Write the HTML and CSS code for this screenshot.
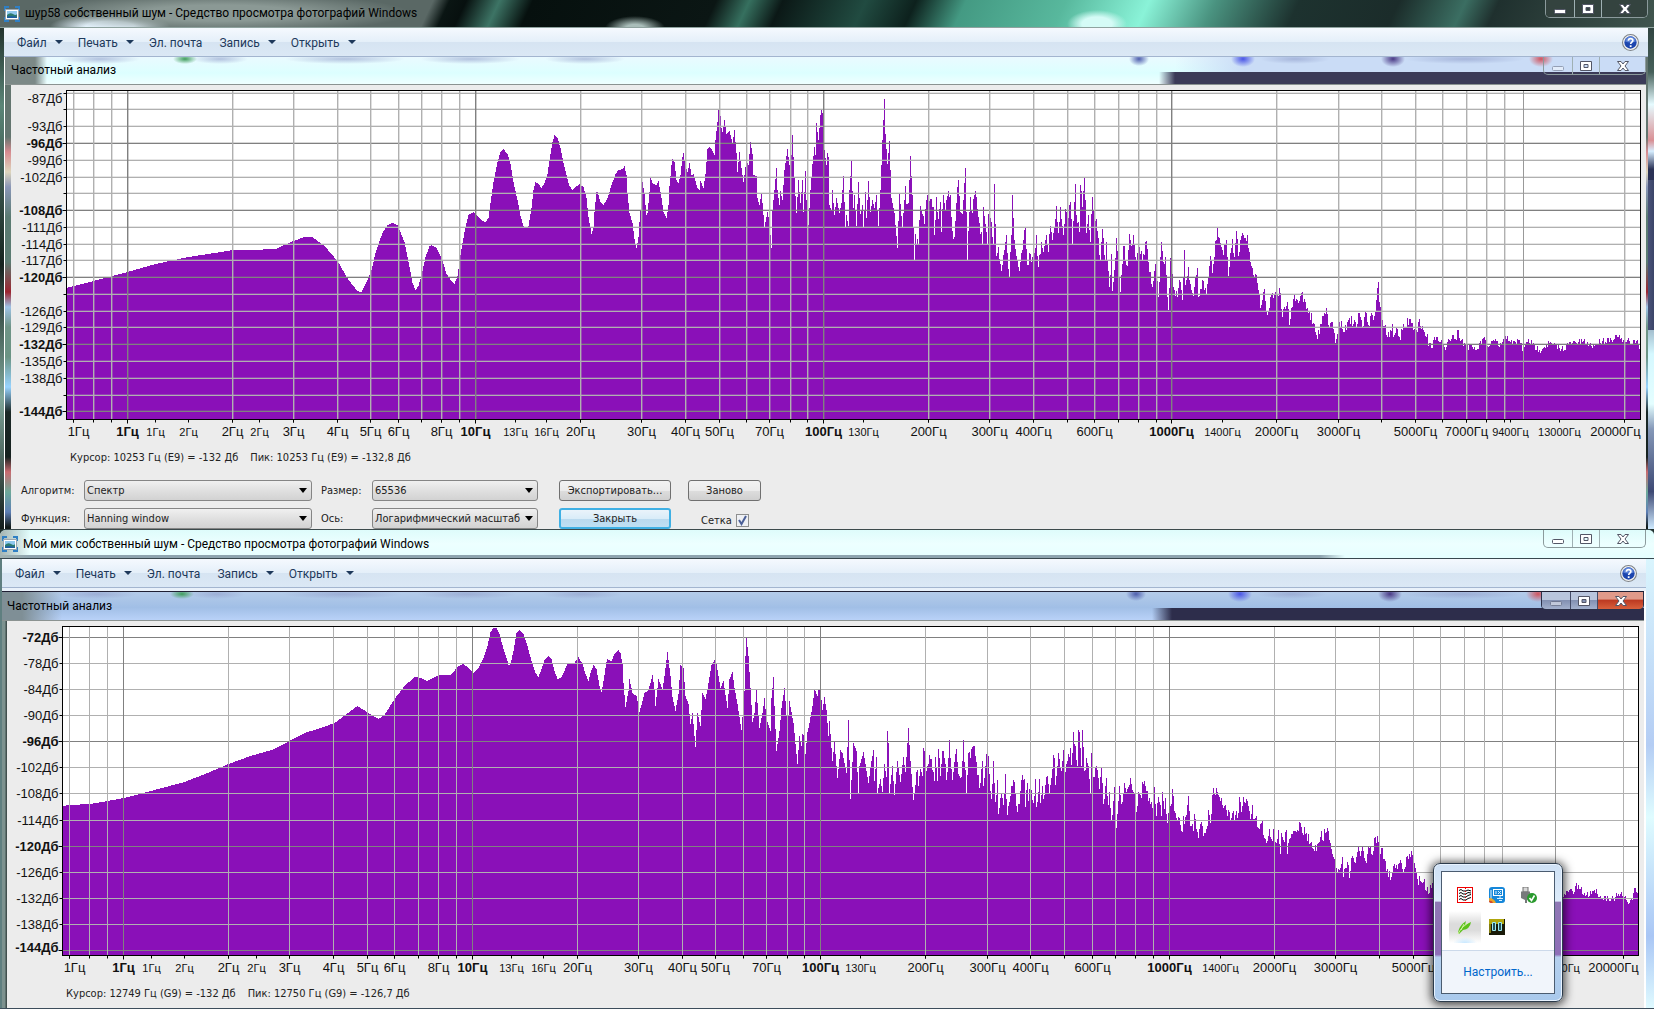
FILE: index.html
```
<!DOCTYPE html>
<html lang="ru">
<head>
  <meta charset="UTF-8">
  <meta name="viewport" content="width=device-width, initial-scale=1.0">
  <title>Средство просмотра фотографий Windows</title>
  <link rel="stylesheet" href="styles.css">
</head>
<body>

  <!-- Shared icons -->
  <svg class="defs" aria-hidden="true">
    <symbol id="photo" viewBox="0 0 16 16">
      <path d="M1 5V1h4M11 1h4v4M15 11v4h-4M5 15H1v-4" fill="none" stroke="#2f7fc4" stroke-width="2"/>
      <rect x="1.5" y="3.5" width="13" height="10" fill="#fff" stroke="#9aa5ae"/>
      <rect x="3" y="5" width="10" height="7" fill="#8fc8ee"/>
      <path d="M3 9q3-3 6-1t4 0v4H3z" fill="#2c7a6e"/>
      <path d="M3 10.500q5-1 10 .5v1H3z" fill="#1e5fa0"/>
    </symbol>
    <symbol id="help" viewBox="0 0 16 16">
      <circle cx="8" cy="8" r="7.500" fill="#f2f2f2" stroke="#7d8287"/>
      <circle cx="8" cy="8" r="5.800" fill="#1d46ae"/>
      <path d="M3 7a5 5 0 0 1 10 0q-5 2-10 0z" fill="#5b83d8"/>
      <path d="M6 6.300c0-2.600 4.200-2.500 4.200-.1 0 1.500-2 1.500-2 3.100" fill="none" stroke="#fff" stroke-width="1.600"/>
      <rect x="7.300" y="10.600" width="1.700" height="1.700" fill="#fff"/>
    </symbol>
    <symbol id="min" viewBox="0 0 14 12">
      <rect x="1.500" y="6.500" width="11" height="4" rx="1" fill="#fff" stroke="#535666"/>
    </symbol>
    <symbol id="max" viewBox="0 0 14 12">
      <path d="M1.500 1.500h11v9h-11zM5 4.500h4v3H5z" fill="#fff" fill-rule="evenodd" stroke="#535666"/>
    </symbol>
    <symbol id="close" viewBox="0 0 14 12">
      <path d="M1.500 1.500h3.500L7 4l2-2.500h3.500L9 6l3.500 4.500H9L7 8l-2 2.500H1.500L5 6z" fill="#fff" stroke="#535666"/>
    </symbol>
  </svg>

  <!-- First viewer window -->
  <section class="window window-back">
    <header class="titlebar">
      <svg class="app-icon"><use href="#photo"/></svg>
      <h1 class="title">шур58 собственный шум - Средство просмотра фотографий Windows</h1>
      <div class="win-buttons dark">
        <button aria-label="Свернуть" class="first"><svg><use href="#min"/></svg></button>
        <button aria-label="Развернуть"><svg><use href="#max"/></svg></button>
        <button aria-label="Закрыть окно" class="wide"><svg><use href="#close"/></svg></button>
      </div>
    </header>
    <nav class="toolbar">
      <button class="drop">Файл</button>
      <button class="drop">Печать</button>
      <button>Эл. почта</button>
      <button class="drop">Запись</button>
      <button class="drop">Открыть</button>
      <button class="help" aria-label="Справка"><svg><use href="#help"/></svg></button>
    </nav>
    <div class="dialog">
      <div class="caption">
        <h2>Частотный анализ</h2>
        <div class="win-buttons">
          <button aria-label="Свернуть" class="first off"><svg><use href="#min"/></svg></button>
          <button aria-label="Развернуть"><svg><use href="#max"/></svg></button>
          <button aria-label="Закрыть анализ" class="wide"><svg><use href="#close"/></svg></button>
        </div>
      </div>
      <div class="panel">
        <svg class="chart" id="chart1" role="img" aria-label="Спектр шур58"></svg>
        <p class="status"><span>Курсор: 10253 Гц (E9) = -132 Дб</span><span>Пик: 10253 Гц (E9) = -132,8 Дб</span></p>
        <form class="controls">
          <label for="algo">Алгоритм:</label>
          <select id="algo"><option>Спектр</option></select>
          <label for="size">Размер:</label>
          <select id="size"><option>65536</option></select>
          <button type="button">Экспортировать...</button>
          <button type="button" class="redo">Заново</button>
          <label for="func">Функция:</label>
          <select id="func"><option>Hanning window</option></select>
          <label for="axis">Ось:</label>
          <select id="axis"><option>Логарифмический масштаб</option></select>
          <button type="button" class="default">Закрыть</button>
          <div class="check">
            <label for="grid">Сетка</label>
            <input type="checkbox" id="grid" checked>
          </div>
        </form>
      </div>
    </div>
  </section>

  <!-- Second viewer window -->
  <section class="window window-front">
    <header class="titlebar">
      <svg class="app-icon"><use href="#photo"/></svg>
      <h1 class="title">Мой мик собственный шум - Средство просмотра фотографий Windows</h1>
      <div class="win-buttons">
        <button aria-label="Свернуть" class="first"><svg><use href="#min"/></svg></button>
        <button aria-label="Развернуть"><svg><use href="#max"/></svg></button>
        <button aria-label="Закрыть окно" class="wide"><svg><use href="#close"/></svg></button>
      </div>
    </header>
    <nav class="toolbar">
      <button class="drop">Файл</button>
      <button class="drop">Печать</button>
      <button>Эл. почта</button>
      <button class="drop">Запись</button>
      <button class="drop">Открыть</button>
      <button class="help" aria-label="Справка"><svg><use href="#help"/></svg></button>
    </nav>
    <div class="dialog">
      <div class="caption">
        <h2>Частотный анализ</h2>
        <div class="win-buttons active">
          <button aria-label="Свернуть" class="first off"><svg><use href="#min"/></svg></button>
          <button aria-label="Развернуть"><svg><use href="#max"/></svg></button>
          <button aria-label="Закрыть анализ" class="wide red"><svg><use href="#close"/></svg></button>
        </div>
      </div>
      <div class="panel">
        <svg class="chart" id="chart2" role="img" aria-label="Спектр мой мик"></svg>
        <p class="status"><span>Курсор: 12749 Гц (G9) = -132 Дб</span><span>Пик: 12750 Гц (G9) = -126,7 Дб</span></p>
      </div>
    </div>
  </section>

  <!-- Notification area flyout -->
  <aside class="tray">
    <div class="tray-inner">
      <div class="tray-icons">
        <button aria-label="Аудио">
          <svg viewBox="0 0 16 16">
            <rect x=".5" y=".5" width="15" height="15" fill="#fff" stroke="#f00000"/>
            <path d="M2 3.500l2-1 2 1.500h3l2-1 3 1M2 6.500l2-1 2 1.500h3l2-1.500 3 .5M2 9.500l2-1 2 1.500h3l2-1.500 3-1M2 12.500l2-1 2 1.500h3l2-1.500 3-1" fill="none" stroke="#000"/>
            <path d="M8.500 1v14" stroke="#f00000" stroke-dasharray="1 2"/>
          </svg>
        </button>
        <button aria-label="Графика">
          <svg viewBox="0 0 16 16">
            <rect width="16" height="16" rx="3" fill="#1687d9"/>
            <rect x="4.500" y="2.500" width="9" height="6" fill="none" stroke="#fff"/>
            <path d="M7 4v3M9 4l3 3M12 4L9 7M2 3v9M8 11.500h6M10 13.500h3M11 9v2" fill="none" stroke="#d9f1ff"/>
            <path d="M0 11q5 0 7 5H3q-3 0-3-3z" fill="#e8a52b"/>
            <path d="M0 14q3-1 4 2H3q-3 0-3-2z" fill="#d8442b"/>
          </svg>
        </button>
        <button aria-label="Извлечение устройства">
          <svg viewBox="0 0 16 16">
            <rect x="2" y="0" width="5" height="5" fill="#d8d8d8" stroke="#707070"/>
            <path d="M0 4.500h9V11l-3 2v3H4v-3l-4-2z" fill="#77797b"/>
            <circle cx="11" cy="11" r="5" fill="#2a9a2e"/>
            <path d="M8.500 11l2 2.500 3-5" fill="none" stroke="#fff" stroke-width="1.600"/>
          </svg>
        </button>
        <button aria-label="Перо" class="hover">
          <svg viewBox="0 0 16 16">
            <path d="M1 14C2 8 5 5 9 2l-1 4 6-3q-1 7-8 8l-4 4z" fill="#5cc11a"/>
            <path d="M1 15C4 9 7 7 11 4M4 11l3-6" fill="none" stroke="#d4f6a4"/>
          </svg>
        </button>
        <button aria-label="Монитор">
          <svg viewBox="0 0 16 16">
            <rect width="16" height="16" fill="#191a08"/>
            <path d="M0 0h15v5H0z" fill="#b0a60d"/>
            <path d="M0 5h2v9H0z" fill="#857e10"/>
            <path d="M3.500 3.500h3v8h-3zM9.500 3.500h3v8h-3z" fill="#24515a" stroke="#9beaf3"/>
          </svg>
        </button>
      </div>
      <div class="tray-footer"><a href="#">Настроить...</a></div>
    </div>
  </aside>

  <script src="charts.js"></script>
</body>
</html>
```
FILE: styles.css
```
* {
  box-sizing: border-box;
}

body {
  margin: 0;
  min-height: 100vh;
  display: flex;
  flex-direction: column;
  position: relative;
  font-family: Roboto, "Open Sans", sans-serif;
  font-size: 12px;
  color: #000;
  background: #20302e;
}

button, select, input {
  font: inherit;
  color: inherit;
  margin: 0;
}

h1, h2, p {
  margin: 0;
  font-weight: normal;
}

.defs {
  display: none;
}

/* Window frames */
.window {
  display: flex;
  flex-direction: column;
}

.window-back {
  padding: 0 6px 0 4px;
  background:
    linear-gradient(#0d1614, #5b8577 20%, #16231f 50%, #7fa69a 75%, #141d1b) left / 4px 100% no-repeat,
    linear-gradient(#2c3f3b 10%, #46605a 40%, #e6fbff 58%, #d98f94 78%, #d7eeff 84%, #2b3256 94%) right top / 6px 180px no-repeat,
    linear-gradient(90deg, #4a5379, #3b4468) right 180px / 6px 150px no-repeat,
    linear-gradient(#3b4468, #d5f8ff 30%, #e4feff 50%, #8598b8 60%, #3d4974 85%, #cfeaff) right bottom / 6px 250px no-repeat,
    #24322f;
}

.window-front {
  flex: 1;
  padding: 0 8px 0 2px;
  border-top: 1px solid #3c4a4c;
  border-bottom: 2px solid #3c4d5b;
  border-radius: 6px 6px 0 0;
  background:
    linear-gradient(#dffbff, #b4cdf4 45%, #dffcff 60%, #a9c6f5 85%, #dffaff) right / 8px 100% no-repeat,
    #5f7f80;
}

.titlebar {
  display: flex;
  align-items: flex-start;
  height: 28px;
  border-bottom: 1px solid #8fa39f;
}

.window-back .titlebar {
  margin: 0 -6px 0 -4px;
  padding: 0 6px 0 4px;
  background:
    radial-gradient(ellipse 190px 20px at 220px 13px, #8b9995 40%, transparent),
    radial-gradient(ellipse 60px 12px at 110px 26px, #e6f4ff 40%, transparent),
    radial-gradient(ellipse 30px 12px at 635px 28px, #a9bdb9 30%, transparent),
    radial-gradient(ellipse 30px 14px at 1097px 24px, #d5fbf6 50%, transparent),
    linear-gradient(115deg, transparent 26%, #0a1513 27%, #07100f 28%, #3d7465 30%, #06100e 32%, #0b1614 43%, #36705f 45%, #0b1816 47%, #214b41 52%, #0d211d 55%, #449a83 58%, #58b89d 64%, #8af3d8 69%, #4a9380 73%, #1d322f 78%, #1b2c2a 84%, #3b6e62 88%, #1f302e 90%, #41564f),
    #5a6865;
}

.window-front .titlebar {
  height: 29px;
  margin: 0 -8px 0 -2px;
  padding: 0 8px 0 2px;
  border-bottom-color: #39484f;
  border-radius: 6px 6px 0 0;
  background:
    linear-gradient(90deg, #a4b4b2, transparent 30px),
    linear-gradient(90deg, #8ea4af 1320px, transparent 1345px) 0 bottom / 100% 3px no-repeat,
    linear-gradient(#defcfb, #edffff 50%, #e5ffff);
}

.app-icon {
  width: 16px;
  height: 16px;
  margin: 6px 5px 0 0;
}

.title {
  flex: 1;
  font-size: 12px;
  line-height: 26px;
}

.window-front .title {
  line-height: 28px;
}

/* Minimize, maximize, close */
.win-buttons {
  display: flex;
  height: 18px;
  border: 1px solid #8b9a9c;
  border-top: 0;
  border-radius: 0 0 5px 5px;
  overflow: hidden;
}

.win-buttons button {
  width: 27px;
  padding: 0;
  border: 0;
  border-right: 1px solid #9fb0b3;
  background: transparent;
  display: flex;
  align-items: center;
  justify-content: center;
}

.win-buttons .first {
  width: 29px;
}

.win-buttons .wide {
  width: 45px;
  border-right: 0;
}

.win-buttons svg {
  width: 14px;
  height: 12px;
}

.win-buttons .off svg {
  opacity: .45;
}

.win-buttons.dark button {
  background: #34433f;
}

.win-buttons.active {
  border-color: #2b3048;
}

.win-buttons.active button {
  background: linear-gradient(#b9c5dc 45%, #8391b2 50%, #a3b1cd);
  border-right-color: #444c68;
}

.win-buttons.active .red {
  background: linear-gradient(#e09a8a 40%, #bd3b22 50%, #d8603c);
}

/* Toolbar */
.toolbar {
  display: flex;
  align-items: center;
  height: 29px;
  padding: 1px 9px 0 13px;
  color: #1e395b;
  background: linear-gradient(#f5f9fe, #e4eff9 50%, #d6e4f2 51%, #dbe8f5);
  border-bottom: 1px solid #a3b5cf;
}

.toolbar button {
  padding: 0;
  border: 0;
  margin-right: 17px;
  background: none;
  line-height: 18px;
}

.toolbar .drop {
  margin-right: 15px;
}

.toolbar .drop::after {
  content: "";
  display: inline-block;
  margin: 0 0 3px 8px;
  border: 4px solid transparent;
  border-top-color: #1e395b;
  border-bottom: 0;
}

.toolbar .help {
  margin: 0 0 0 auto;
  width: 17px;
  height: 17px;
}

.help svg {
  width: 17px;
  height: 17px;
  display: block;
}

/* Frequency analysis dialog */
.dialog {
  display: flex;
  flex-direction: column;
  flex: 1;
}

.window-back .dialog {
  padding: 0 2px 0 6px;
  border-left: 1px solid #fff;
  background: linear-gradient(#63756f 80px, #d78b90 95px, #ded6bd 115px, #8a97b8 130px, #5b7b72 160px, #5b7b72 205px, #9c2530 235px, #9fc3e6 250px, #6f9487 270px, #6b9484 300px, #98d4ff 330px, #1a2826 355px, #16211f 400px, #c96b70 415px, #6da99a 435px, #5e7fb5 455px, #131b19 470px);
}

.window-front .dialog {
  padding: 0 2px 0 5px;
  border-top: 3px solid #e9f1fa;
  background: linear-gradient(90deg, #7d928f 3px, #41504e 4px, #cdd7e8 50%, #fff);
}

.caption {
  display: flex;
  justify-content: space-between;
  height: 28px;
  border-bottom: 1px solid #8b9391;
  /* what shows through the glass */
  --ghosts:
    radial-gradient(ellipse 12px 5px at 180px 2px, #3f9d5c, transparent),
    radial-gradient(ellipse 40px 5px at 95px 2px, #8f9dc999, transparent),
    radial-gradient(ellipse 28px 5px at 215px 2px, #8f9dc999, transparent),
    radial-gradient(ellipse 60px 5px at 340px 2px, #8f9dc999, transparent),
    radial-gradient(ellipse 50px 5px at 465px 2px, #8f9dc999, transparent),
    radial-gradient(ellipse 40px 5px at 580px 2px, #8f9dc999, transparent),
    radial-gradient(ellipse 10px 7px at 1134px 2px, #4f5fae, transparent),
    radial-gradient(ellipse 12px 8px at 1238px 2px, #4a55e6, transparent),
    radial-gradient(ellipse 35px 5px at 1290px 2px, #8f9dc999, transparent),
    radial-gradient(ellipse 12px 8px at 1388px 2px, #4a3a86, transparent),
    radial-gradient(ellipse 60px 5px at 1460px 2px, #8f9dc999, transparent),
    radial-gradient(ellipse 12px 8px at 1536px 2px, #d05560, transparent);
}

.window-back .caption {
  margin: 0 0 0 -6px;
  background:
    var(--ghosts),
    linear-gradient(90deg, #7c8987 30px, transparent 42px),
    linear-gradient(90deg, transparent 1154px, #3b3a57 1170px) 0 bottom / 100% 12px no-repeat,
    linear-gradient(90deg, transparent 1170px, #cadcf6 1240px) 0 0 / 100% 15px no-repeat,
    linear-gradient(#eafaff, #dcffff 60%, #efffff);
}

.window-front .caption {
  height: 30px;
  margin: 0 0 0 -5px;
  border-top: 1px solid #1f1f33;
  background:
    var(--ghosts),
    linear-gradient(90deg, #7f8f96 20px, transparent 60px),
    linear-gradient(90deg, transparent 1150px, #2d2d4b 1170px) 0 bottom / 100% 12px no-repeat,
    linear-gradient(#b4cbe9, #a1bfe6 55%, #b9d2f8);
}

.caption h2 {
  padding-left: 6px;
  font-size: 12px;
  line-height: 26px;
}

.window-front .caption h2 {
  padding-left: 5px;
  line-height: 28px;
}

.panel {
  flex: 1;
  background: #ececec;
  font-family: "DejaVu Sans Condensed", "DejaVu Sans", sans-serif;
  font-size: 11px;
}

.chart {
  display: block;
  width: 100%;
  height: 359px;
}

.chart text {
  font-family: "Liberation Sans", sans-serif;
  font-size: 13px;
  fill: #111;
}

.chart .small {
  font-size: 11px;
}

.chart .bold {
  font-weight: bold;
}

.status {
  display: flex;
  gap: 12px;
  padding-left: 59px;
  line-height: 28px;
  color: #222;
}

.controls {
  display: grid;
  grid-template-columns: 63px 228px 60px 166px 112px 73px;
  grid-auto-rows: 21px;
  align-items: center;
  row-gap: 7px;
  padding: 8px 0 0 10px;
  color: #222;
}

.controls label[for="size"], .controls label[for="axis"] {
  padding-left: 9px;
}

.controls select {
  appearance: none;
  width: 100%;
  height: 21px;
  padding: 0 16px 0 2px;
  border: 1px solid #858585;
  border-radius: 3px;
  background:
    url("data:image/svg+xml,%3Csvg xmlns='http://www.w3.org/2000/svg' width='8' height='5'%3E%3Cpath d='M0 0h8L4 5z'/%3E%3C/svg%3E") right 4px center no-repeat,
    linear-gradient(#f0f0f0, #e0e0e0 50%, #d2d2d2);
}

.controls button {
  height: 21px;
  margin-left: 21px;
  margin-right: -21px;
  padding: 0;
  border: 1px solid #707070;
  border-radius: 3px;
  background: linear-gradient(#f2f2f2, #ebebeb 50%, #dddddd 51%, #cfcfcf);
}

.controls .redo, .check {
  margin-left: 38px;
  margin-right: -38px;
}

.controls .default {
  border: 2px solid #3fb0e4;
  background: linear-gradient(#eaf3fa, #d9ecf8 50%, #b9d9ee 51%, #bfdff3);
}

.check {
  display: flex;
  align-items: center;
  gap: 4px;
  padding: 3px 0 0 13px;
}

.check input {
  appearance: none;
  width: 13px;
  height: 13px;
  border: 1px solid #8e8f8f;
  background: url("data:image/svg+xml,%3Csvg xmlns='http://www.w3.org/2000/svg' width='11' height='11'%3E%3Cpath d='M2 5l2.500 4L9 1' fill='none' stroke='%234b5f97' stroke-width='2'/%3E%3C/svg%3E") center no-repeat, #eef0f4;
}

/* Tray flyout */
.tray {
  position: absolute;
  right: 91px;
  bottom: 8px;
  width: 130px;
  padding: 7px;
  border: 1px solid #2c3b4b;
  border-radius: 7px;
  background: linear-gradient(#cfe1f5, #dcebfa 27%, #8f78b5 28%, #8f6fb8 66%, #b5d0ee 68%, #a9c9ec);
  box-shadow: inset 0 0 0 1px #e8f3ff, 0 1px 10px 2px rgba(0, 0, 0, .7);
}

.tray-inner {
  border: 1px solid #4b5c70;
  background: #fff;
}

.tray-icons {
  display: grid;
  grid-template-columns: repeat(3, 32px);
  grid-auto-rows: 32px;
  justify-content: center;
  padding: 7px 2px 7px 0;
}

.tray-icons button {
  padding: 8px;
  border: 0;
  background: none;
}

.tray-icons svg {
  display: block;
  width: 16px;
  height: 16px;
}

.tray-icons .hover {
  background:
    radial-gradient(ellipse 12px 6px at 50% 100%, #c9e8ff, transparent),
    linear-gradient(#fff, #dcdcdc 40%, #dcdcdc 60%, #fff);
}

.tray-footer {
  border-top: 1px solid #ccd9ea;
  background: #f1f5fb;
  text-align: center;
  line-height: 42px;
}

.tray-footer a {
  color: #0066cc;
  text-decoration: none;
}
```
FILE: charts.js
```
// Plot area inside the svg
const LEFT = 55.5, TOP = 5.5, RIGHT = 5.5, HEIGHT = 329;

// Frequencies with a label: value, text, kind
const labels = [
  [0.7, '1Гц', ''], [1, '1Гц', 'bold'], [1.2, '1Гц', 'small'], [1.5, '2Гц', 'small'],
  [2, '2Гц', ''], [2.4, '2Гц', 'small'], [3, '3Гц', ''], [4, '4Гц', ''], [5, '5Гц', ''],
  [6, '6Гц', ''], [8, '8Гц', ''], [10, '10Гц', 'bold'], [13, '13Гц', 'small'],
  [16, '16Гц', 'small'], [20, '20Гц', ''], [30, '30Гц', ''], [40, '40Гц', ''],
  [50, '50Гц', ''], [70, '70Гц', ''], [100, '100Гц', 'bold'], [130, '130Гц', 'small'],
  [200, '200Гц', ''], [300, '300Гц', ''], [400, '400Гц', ''], [600, '600Гц', ''],
  [1000, '1000Гц', 'bold'], [1400, '1400Гц', 'small'], [2000, '2000Гц', ''],
  [3000, '3000Гц', ''], [5000, '5000Гц', ''], [7000, '7000Гц', ''],
  [9400, '9400Гц', 'small'], [13000, '13000Гц', 'small'], [20000, '20000Гц', '']
];

// Spectrum outlines, x,y pairs
const first = {
  id: 'chart1', x0: 66, y0: 90, span: 1575, one: 61, decade: 348.4, cursor: 10253,
  dbTop: 96, dbTopY: 53, dbStep: 5.59, from: 87, step: 3, bold: 12, skip: [90, 105, 123, 141], soft: true, hide: [],
  points: `66,288 73,286 93,281 112,276 127,272 155,264 188,257 214,253 232,250 250,250 275,249 293,241 304,237 312,237
  325,247 337,261 348,280 357,291 361,292 366,282 371,270 375,253 379,241 382,233 387,225 392,223 397,225 400,232 404,242
  409,267 412,283 415,290 418,286 421,275 425,257 429,246 431,245 436,248 442,260 446,274 451,281 454,284 457,276 460,255
  462,243 465,227 468,215 473,212 478,217 482,221 485,222 488,218 490,203 493,182 497,162 500,152 503,149 507,154 510,164
  513,182 517,200 520,216 523,226 526,228 528,226 531,208 533,190 535,182 538,184 541,188 544,183 547,174 549,160 552,142
  554,135 557,138 560,148 563,163 567,179 569,186 572,190 575,187 579,184 583,187 586,198 588,217 591,234 593,227 594,212
  596,192 597,192 600,202 603,205 607,198 611,185 615,174 618,170 622,169 624,166 626,175 627,193 629,213 632,223 634,239
  636,248 638,237 639,222 641,199 642,182 644,194 646,215 647,213 649,192 650,177 652,183 656,185 658,181 661,198 663,212
  666,218 668,205 669,186 671,165 672,159 674,162 676,180 678,183 680,175 682,157 683,153 685,166 687,172 689,163 691,175
  693,174 697,188 699,190 700,181 703,188 705,174 707,149 709,147 711,149 714,155 715,140 717,122 718,110 719,103 721,128
  722,132 724,120 726,134 729,131 732,143 734,130 736,153 737,172 739,152 741,168 743,182 746,160 748,165 750,142 752,154
  753,175 756,176 757,198 759,205 761,193 762,203 764,227 767,212 769,222 771,248 772,210 774,190 776,168 777,190 779,205
  780,191 782,200 784,170 787,149 789,165 790,175 792,135 794,178 796,213 798,180 800,203 802,180 803,212 805,171 806,200
  808,225 810,190 812,164 814,147 815,155 816,123 818,140 820,115 821,110 823,115 824,150 826,165 827,153 828,157 829,205
  831,211 832,190 834,215 836,198 839,213 841,203 843,176 845,227 846,215 848,226 849,190 851,161 853,220 855,195 857,226
  859,182 861,214 863,205 864,227 866,192 867,218 869,181 871,212 873,200 875,208 877,195 879,226 881,190 883,140 885,99
  886,134 888,164 890,141 892,198 895,213 898,248 900,193 903,227 906,186 907,204 909,203 911,156 913,195 915,261 916,234
  917,244 919,244 921,206 925,224 927,200 929,198 932,199 934,207 935,235 937,197 939,219 941,202 942,232 944,195 946,210
  948,196 951,195 953,231 955,237 957,203 959,180 961,212 963,214 966,168 967,212 968,260 970,212 971,197 973,213 975,195
  977,197 979,217 983,244 984,207 988,245 990,192 991,218 994,245 995,184 997,256 999,247 1002,271 1005,250 1007,235
  1010,278 1012,235 1013,195 1015,240 1017,256 1020,271 1023,250 1026,228 1028,265 1031,254 1034,265 1037,235 1039,267
  1042,242 1044,252 1047,235 1049,252 1051,226 1053,240 1057,206 1059,233 1061,207 1064,235 1066,209 1068,222 1071,202
  1073,244 1076,184 1077,215 1080,232 1081,185 1083,207 1085,178 1087,233 1089,215 1091,242 1093,197 1095,232 1097,219
  1101,261 1103,229 1106,260 1107,242 1110,287 1112,254 1113,291 1115,270 1117,238 1119,274 1121,292 1124,246 1128,266
  1130,234 1132,246 1134,235 1137,260 1139,240 1143,260 1147,241 1150,272 1153,287 1157,263 1159,297 1162,242 1164,262
  1166,257 1169,310 1171,258 1175,290 1178,297 1180,280 1183,300 1185,250 1186,285 1189,267 1192,290 1194,296 1198,268
  1199,297 1203,280 1207,294 1211,256 1213,273 1218,227 1220,238 1224,255 1227,240 1229,276 1233,239 1235,257 1237,231
  1239,256 1242,236 1245,238 1248,235 1251,262 1254,275 1257,275 1259,290 1261,308 1265,289 1268,315 1272,295 1276,292
  1281,293 1283,317 1288,302 1290,325 1294,299 1299,303 1302,293 1305,299 1310,312 1314,323 1318,339 1323,316 1327,308
  1330,327 1333,322 1336,343 1340,322 1347,330 1350,318 1357,328 1360,313 1363,327 1367,313 1369,325 1372,313 1374,320
  1377,300 1379,282 1380,302 1383,320 1388,337 1393,324 1394,337 1397,327 1400,337 1405,328 1410,319 1415,329 1418,332
  1420,319 1423,326 1427,337 1430,343 1433,348 1435,337 1442,340 1446,350 1450,340 1453,335 1457,340 1458,330 1462,340
  1467,346 1478,349 1484,338 1488,346 1495,341 1500,347 1508,336 1513,344 1520,340 1524,351 1529,339 1533,345 1540,350
  1550,343 1562,349 1573,343 1583,342 1592,346 1603,341 1618,337 1625,342 1637,341 1641,350`
};

const second = {
  id: 'chart2', x0: 62, y0: 625, span: 1576, one: 61, decade: 348.7, cursor: 12749,
  dbTop: 72, dbTopY: 11, dbStep: 4.347, from: 72, step: 6, bold: 24, skip: [], soft: false, hide: [7000, 9400],
  points: `62,805 69,804 89,803 107,800 123,797 143,792 154,789 184,781 207,772 228,763 250,755 271,749 289,740 304,732
  320,727 334,722 346,713 357,705 368,712 378,718 384,714 394,698 404,685 414,676 421,677 426,680 438,674 450,674 458,665
  463,663 468,667 473,672 478,667 483,657 487,645 490,631 493,627 496,627 499,633 503,648 507,660 508,664 510,663 513,650
  516,632 519,629 523,633 527,645 531,660 535,672 538,676 541,668 544,659 548,655 551,658 554,670 557,678 561,676 567,663
  573,663 578,656 582,663 585,673 588,680 590,672 593,664 596,668 599,685 601,691 603,680 606,661 607,658 611,660 614,653
  618,649 620,652 622,663 623,682 625,706 628,690 629,678 632,692 636,695 639,711 642,700 644,692 648,689 652,674 654,688
  655,705 658,678 662,688 664,675 667,651 670,675 672,696 675,710 678,693 680,664 683,667 685,695 688,703 690,723 692,712
  695,746 697,712 700,725 702,692 705,698 707,688 711,664 715,657 718,675 720,687 723,680 727,707 729,678 732,671 734,687
  737,703 741,729 744,690 745,655 746,637 748,655 750,687 752,721 754,712 756,689 759,727 762,712 764,697 766,718 770,730
  771,697 773,676 774,705 776,750 779,730 781,707 784,687 787,727 789,700 793,722 797,763 799,735 801,745 802,733 804,735
  805,753 807,731 809,722 812,705 814,688 817,695 818,688 820,688 822,709 824,696 826,709 828,735 829,720 832,760 834,741
  837,777 840,749 842,752 846,772 848,719 850,798 853,742 856,750 858,792 859,765 863,751 868,782 871,760 873,749 874,780
  876,756 877,792 880,778 882,791 884,763 886,776 887,730 888,742 889,792 892,765 894,794 897,760 900,781 903,756 905,771
  908,727 910,760 913,799 917,769 918,785 920,768 922,775 923,747 926,770 929,754 931,758 934,780 935,756 937,780 938,748
  940,775 942,750 944,757 946,779 949,739 952,779 954,761 956,748 958,773 961,776 963,739 966,792 968,752 970,757 972,746
  974,745 979,787 982,760 983,785 985,765 987,746 989,773 991,798 993,760 995,801 997,779 998,813 1001,792 1003,804
  1005,773 1007,814 1010,795 1011,785 1014,781 1017,811 1019,803 1022,774 1024,778 1025,806 1027,782 1028,800 1030,785
  1033,802 1035,778 1036,806 1039,778 1040,802 1042,785 1043,798 1047,775 1049,792 1053,754 1054,757 1055,784 1058,752
  1061,770 1063,749 1065,771 1070,747 1071,764 1073,731 1076,759 1077,765 1078,729 1079,731 1081,765 1082,729 1084,770
  1086,757 1088,765 1090,792 1091,752 1092,783 1096,765 1099,788 1101,766 1103,803 1106,777 1108,804 1109,791 1111,819
  1113,800 1115,782 1116,827 1118,800 1119,785 1121,803 1124,782 1126,791 1130,777 1134,792 1136,811 1138,791 1141,797
  1142,781 1144,780 1148,800 1152,807 1154,786 1156,815 1158,796 1161,815 1162,791 1164,808 1165,797 1167,822 1169,796
  1171,803 1172,788 1174,810 1177,820 1179,817 1182,831 1183,815 1184,823 1188,795 1190,825 1193,830 1194,813 1198,837
  1201,821 1203,835 1207,825 1208,809 1210,822 1213,787 1214,792 1216,787 1220,800 1223,807 1225,804 1227,815 1228,809
  1231,817 1233,810 1234,820 1236,810 1237,817 1239,796 1241,811 1243,796 1247,800 1249,810 1250,818 1252,804 1253,818
  1255,817 1259,828 1262,820 1263,834 1267,840 1269,828 1272,840 1273,828 1276,842 1278,829 1280,853 1281,832 1284,841
  1286,829 1287,853 1289,838 1291,833 1296,831 1300,822 1302,832 1304,826 1306,832 1310,842 1314,850 1318,842 1321,830
  1323,840 1324,828 1328,830 1331,848 1334,858 1338,868 1342,856 1343,876 1347,861 1349,877 1352,855 1355,862 1358,846
  1360,855 1363,850 1366,862 1368,846 1371,853 1375,836 1376,842 1377,835 1379,853 1381,847 1383,858 1387,868 1390,879
  1393,865 1398,863 1404,868 1406,856 1408,858 1411,850 1413,862 1417,878 1420,880 1423,881 1429,892 1432,882 1450,890
  1500,897 1550,897 1563,896 1570,888 1573,893 1575,885 1580,888 1585,895 1594,889 1600,895 1613,898 1620,893 1627,901
  1632,899 1634,887 1638,893`
};

// One value per pixel column, with a little jitter where the spectrum gets noisy
function columns(chart) {
  const pts = chart.points.trim().split(/\s+/).map(p => p.split(',').map(Number));
  const out = [];
  let k = 0;
  let seed = 7;
  for (let i = 0; i <= chart.span; i++) {
    const x = chart.x0 + i;
    while (k < pts.length - 2 && pts[k + 1][0] <= x) k++;
    const [ax, ay] = pts[k];
    const [bx, by] = pts[k + 1];
    const t = Math.min(1, (x - ax) / (bx - ax));
    seed = (seed * 16807) % 2147483647;
    const noise = x > 915 && t > 0 ? (seed / 2147483647 - 0.5) * (x > 1430 ? 7 : 11) : 0;
    out.push(Math.round(ay + (by - ay) * t + noise - chart.y0));
  }
  return out;
}

function draw(chart) {
  const svg = document.getElementById(chart.id);
  const width = svg.clientWidth;
  const plot = width - LEFT - RIGHT;
  const scale = plot / chart.span;
  const bottom = TOP + HEIGHT;
  const right = LEFT + plot;
  const fx = f => Math.round(LEFT + (chart.one + chart.decade * Math.log10(f)) * scale - 0.5) + 0.5;
  let html = `<rect x="${LEFT}" y="${TOP}" width="${plot}" height="${HEIGHT}" fill="#fff"/>`;

  // columns sit on whole pixels so that narrow peaks stay visible
  const column = i => Math.min(Math.floor(right), Math.floor(LEFT + i * scale));
  let d = `M${column(0)} ${bottom}`;
  columns(chart).forEach((y, i) => {
    d += `V${Math.floor(TOP) + y}H${column(i + 1)}`;
  });
  html += `<path d="${d}V${bottom}Z" fill="#8a10b8" shape-rendering="crispEdges"/>`;

  // horizontal grid and level labels
  for (let db = chart.from; db <= 144; db += chart.step) {
    const y = Math.round(TOP + chart.dbTopY + (db - chart.dbTop) * chart.dbStep - 0.5) + 0.5;
    const bold = db % chart.bold === 0 || db === 144;
    const color = bold ? '#808080' : '#b0b0b0';
    html += `<path d="M${LEFT} ${y}H${right}" stroke="${color}"/>`;
    if (chart.soft) html += `<path d="M${LEFT} ${y - 1}H${right}" stroke="${color}" opacity=".3"/>`;
    html += `<path d="M${LEFT - (bold ? 4 : 3)} ${y}H${LEFT}" stroke="#000"/>`;
    if (!chart.skip.includes(db)) {
      const ty = Math.min(Math.max(y, TOP + 8), bottom - 8);
      html += `<text x="${LEFT - 4}" y="${ty + 4.5}" text-anchor="end"${bold ? ' class="bold"' : ''}>-${db}Дб</text>`;
    }
  }

  // vertical grid
  const lines = [0.7, 0.8, 0.9];
  for (let p = 1; p <= 1000; p *= 10) {
    for (let n = 1; n < 10; n++) lines.push(n * p);
  }
  lines.push(20000, chart.cursor);
  lines.forEach(f => {
    const x = fx(f);
    const major = [1, 10, 100, 1000].includes(f);
    const color = major ? '#808080' : f === chart.cursor ? '#999' : '#b0b0b0';
    html += `<path d="M${x} ${TOP}V${bottom}" stroke="${color}"/>`;
    if (chart.soft && f !== chart.cursor) html += `<path d="M${x + 1} ${TOP}V${bottom}" stroke="${color}" opacity=".4"/>`;
    if (f !== chart.cursor) html += `<path d="M${x} ${bottom}v${major ? 4 : 3}" stroke="#000"/>`;
  });

  // frequency labels
  labels.filter(([f]) => !chart.hide.includes(f)).forEach(([f, text, kind]) => {
    const x = fx(f);
    let tx = x;
    if (f === 0.7) tx = x + 5;
    if (f === 20000) tx = right - 25;
    html += `<path d="M${x} ${bottom}v3" stroke="#000"/>`;
    html += `<text x="${tx}" y="351" text-anchor="middle" class="${kind}">${text}</text>`;
  });

  html += `<rect x="${LEFT}" y="${TOP}" width="${plot}" height="${HEIGHT}" fill="none" stroke="#000"/>`;
  svg.innerHTML = html;
}

function drawAll() {
  draw(first);
  draw(second);
}

window.addEventListener('resize', drawAll);
drawAll();
```
